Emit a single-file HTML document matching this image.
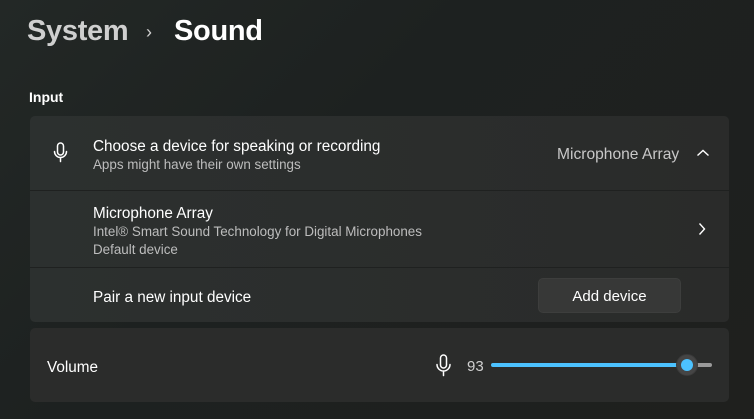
<!DOCTYPE html>
<html><head><meta charset="utf-8"><style>
*{margin:0;padding:0;box-sizing:border-box}
body{width:754px;height:419px;overflow:hidden;font-family:"Liberation Sans",sans-serif;color:#fff;
background:linear-gradient(135deg,#232826 0%,#1d2120 40%,#1f201e 100%);position:relative}
.abs{position:absolute;white-space:nowrap}
.t1{left:27px;top:15px;font-size:29px;color:#cfcfcf;font-weight:600;letter-spacing:-0.3px}
.t2{left:174px;top:15px;font-size:29px;color:#fff;font-weight:600;letter-spacing:-0.3px}
.sep{left:146px;top:22px;font-size:18px;color:#cfcfcf}
.inp{left:29px;top:89px;font-size:14px;font-weight:600}
.card{left:30px;width:699px;background:#2b2c2b;border-radius:5px}
.line{left:30px;width:699px;height:1px;background:#1f2120}
.h{font-size:15.3px;color:#fff}
.s{font-size:13.4px;color:#bdbdbd}
</style></head><body>
<div class="abs t1">System</div>
<div class="abs sep">›</div>
<div class="abs t2">Sound</div>
<div class="abs inp">Input</div>
<div class="abs card" style="top:116px;height:206px;background:linear-gradient(90deg,#2c302f,#2a2b2a)"></div>
<div class="abs line" style="top:190px"></div>
<div class="abs line" style="top:267px"></div>
<svg class="abs" style="left:51px;top:141px" width="20" height="24" viewBox="0 0 20 24" fill="none" stroke="#fff" stroke-width="1.5" stroke-linecap="round"><rect x="6.5" y="2" width="6" height="12" rx="3"/><path d="M3.5 10.5a6 6 0 0 0 12 0M9.5 16.5v4"/></svg>
<div class="abs h" style="left:93px;top:138px">Choose a device for speaking or recording</div>
<div class="abs s" style="left:93px;top:157px">Apps might have their own settings</div>
<div class="abs" style="left:557px;top:146px;font-size:15.6px;color:#c8c8c8">Microphone Array</div>
<svg class="abs" style="left:695px;top:148px" width="16" height="10" viewBox="0 0 16 10" fill="none" stroke="#fff" stroke-width="1.4"><path d="M2.5 7.5L8 2.5l5.5 5"/></svg>
<div class="abs h" style="left:93px;top:205px">Microphone Array</div>
<div class="abs s" style="left:93px;top:224px">Intel® Smart Sound Technology for Digital Microphones</div>
<div class="abs s" style="left:93px;top:242px">Default device</div>
<svg class="abs" style="left:697px;top:221px" width="10" height="16" viewBox="0 0 10 16" fill="none" stroke="#fff" stroke-width="1.4"><path d="M2.5 2.5L7.5 8l-5 5.5"/></svg>
<div class="abs h" style="left:93px;top:289px">Pair a new input device</div>
<div class="abs" style="left:538px;top:278px;width:143px;height:35px;background:#373837;border-radius:5px;border:1px solid #3d3e3d;text-align:center;line-height:35px;font-size:15px">Add device</div>
<div class="abs card" style="top:328px;height:74px"></div>
<div class="abs h" style="left:47px;top:359px">Volume</div>
<svg class="abs" style="left:434px;top:354px" width="20" height="24" viewBox="0 0 20 24" fill="none" stroke="#fff" stroke-width="1.5" stroke-linecap="round"><rect x="6.5" y="1" width="6" height="13" rx="3"/><path d="M3 10.5a6.5 6.5 0 0 0 13 0M9.5 17.5v4"/></svg>
<div class="abs" style="left:467px;top:358px;font-size:15px;color:#d0d0d0">93</div>
<div class="abs" style="left:491px;top:363px;width:200px;height:4px;background:#4cc2ff;border-radius:2px"></div>
<div class="abs" style="left:690px;top:363px;width:22px;height:4px;background:#9a9a9a;border-radius:2px"></div>
<div class="abs" style="left:676px;top:354px;width:22px;height:22px;border-radius:50%;background:#454545;border:1px solid #3a3a3a"></div>
<div class="abs" style="left:681px;top:359px;width:12px;height:12px;border-radius:50%;background:#4cc2ff"></div>
</body></html>
